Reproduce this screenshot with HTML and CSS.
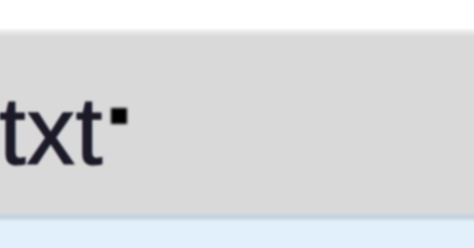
FILE: index.html
```html
<!DOCTYPE html>
<html lang="en">
<head>
    <meta charset="UTF-8">
    <meta name="viewport" content="width=device-width, initial-scale=1.0">
    <title>txt</title>
    <link rel="stylesheet" href="styles.css">
</head>
<body>
    <div class="top"></div>
    <div class="bar">
        <div class="line">
            <span class="word">txt</span><span class="mark"></span>
        </div>
    </div>
    <div class="rule"></div>
    <div class="pane"></div>
</body>
</html>
```

FILE: styles.css
```css
html, body {
    margin: 0;
    height: 100%;
    overflow: hidden;
    background-color: #fff;
    font-family: "Liberation Sans", Arial, sans-serif;
}
.top {
    height: 28px;
}
.bar {
    height: 184px;
    background: linear-gradient(#fdfdfd 0, #e4e4e4 5px, #d9d9d9 9px, #d9d9d9 100%);
    padding-top: 55px;
    box-sizing: border-box;
}
.line {
    display: flex;
    align-items: baseline;
    margin-left: -1px;
    line-height: 1;
}
.word {
    font-size: 96px;
    letter-spacing: 1px;
    color: #1c1a26;
    -webkit-text-stroke: 1.2px #1c1a26;
    filter: blur(1.2px);
    text-shadow: -1px 0 rgba(120, 0, 60, 0.45), 1px 0 rgba(0, 140, 255, 0.45);
}
.mark {
    width: 16px;
    height: 16px;
    margin-left: 8px;
    background-color: #000;
    filter: blur(1.8px);
    align-self: flex-start;
    margin-top: 25px;
}
.rule {
    height: 10px;
    background: linear-gradient(#d9d9d9, #c6d3df 45%, #c9d6e2 60%, #e2f0fb);
}
.pane {
    height: 30px;
    background-color: #e2f0fb;
}
```
